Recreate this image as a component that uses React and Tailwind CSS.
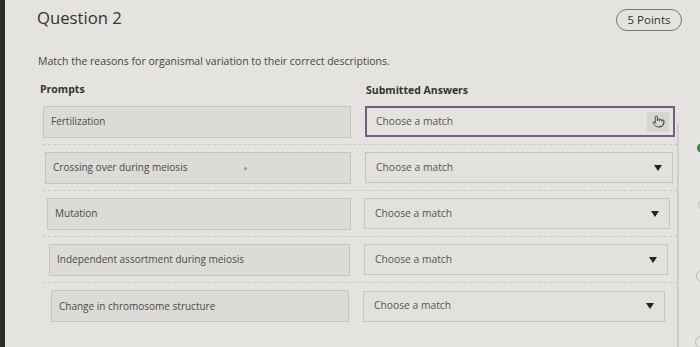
import React from "react";
import { Pointer } from "lucide-react";

const rows = [
  { text: "Fertilization", pml: "ml-0", pw: "w-[308px]", sml: "ml-[14px]", sw: "w-[310px]", active: true },
  { text: "Crossing over during meiosis", pml: "ml-[2px]", pw: "w-[306px]", sml: "ml-[14px]", sw: "w-[308px]", dot: true },
  { text: "Mutation", pml: "ml-[4px]", pw: "w-[304px]", sml: "ml-[13px]", sw: "w-[306px]" },
  { text: "Independent assortment during meiosis", pml: "ml-[6px]", pw: "w-[301px]", sml: "ml-[14px]", sw: "w-[304px]" },
  { text: "Change in chromosome structure", pml: "ml-[8px]", pw: "w-[298px]", sml: "ml-[14px]", sw: "w-[302px]", last: true },
];

function Caret() {
  return (
    <svg width="8" height="6" viewBox="0 0 8 6">
      <path d="M0 0 L8 0 L4 6 Z" fill="#222" />
    </svg>
  );
}

export default function App() {
  return (
    <div
      className="w-[700px] h-[347px] flex overflow-hidden bg-[#e4e3df] text-[#3b3b3b]"
      style={{ fontFamily: '"Open Sans", "Noto Sans", sans-serif' }}
    >
      <div className="w-[5px] shrink-0 bg-[#2b2b2b]" />
      <div className="w-[672px] shrink-0 flex flex-col relative z-10">
        <div className="flex items-start justify-between pl-[32px] pt-[7px]">
          <div className="text-[16.7px] leading-[22px] text-[#333]">Question 2</div>
          <div className="mt-[2px] h-[22px] w-[66px] shrink-0 rounded-full border border-[#777] flex items-center justify-center text-[11.5px] text-[#333] mr-[-5px]">
            5 Points
          </div>
        </div>
        <div className="pl-[33px] mt-[22px] text-[10.5px] leading-[16px] text-[#444]">
          Match the reasons for organismal variation to their correct descriptions.
        </div>
        <div className="flex mt-[12px] text-[10.5px] leading-[16px] font-bold text-[#333]">
          <div className="pl-[35px] w-[361px]">Prompts</div>
          <div className="mt-[1px]">Submitted Answers</div>
        </div>
        <div className="ml-[38px] mt-[1px] flex flex-col">
          {rows.map((r, i) => (
            <div
              key={i}
              className={
                "flex items-center h-[46px] " +
                (r.last ? "" : "border-b border-dashed border-[#cbcac5]")
              }
            >
              <div
                className={
                  r.pml +
                  " " +
                  r.pw +
                  " h-[32px] shrink-0 bg-[#dcdbd7] border border-[#c6c5c1] flex items-center pl-[7px] text-[10px] text-[#4a4a4a] relative"
                }
              >
                {r.text}
                {r.dot && <span className="absolute left-[198px] top-[14px] w-[3px] h-[3px] rounded-full bg-[#999]" />}
              </div>
              <div
                className={
                  r.sml +
                  " " +
                  r.sw +
                  " h-[31px] shrink-0 flex items-center justify-between text-[10.3px] text-[#555] " +
                  (r.active
                    ? "bg-[#e4e3df] border-2 border-[#6e6180] pl-[9px] pr-[4px]"
                    : "bg-[#e2e1dd] border border-[#c6c5c1] pl-[10px] pr-[10px]")
                }
              >
                <span>Choose a match</span>
                {r.active ? (
                  <span className="w-[22px] h-[20px] bg-[#d6d5d1] flex items-center justify-center">
                    <Pointer size={13} strokeWidth={1.6} color="#333" />
                  </span>
                ) : (
                  <Caret />
                )}
              </div>
            </div>
          ))}
        </div>
      </div>
      <div className="flex-1 flex flex-col">
        <div className="h-[123px]" />
        <div className="flex-1 border-l-2 border-[#cfceca] bg-[#e6e5e1] relative">
          <span className="absolute left-[18px] top-[20px] w-[10px] h-[10px] rounded-full bg-[#2f8a4e]" />
          <span className="absolute left-[19px] top-[76px] w-[12px] h-[12px] rounded-full border border-[#bbb]" />
          <span className="absolute left-[17px] top-[147px] w-[12px] h-[12px] rounded-full border border-[#bbb]" />
          <span className="absolute left-[16px] top-[213px] w-[12px] h-[12px] rounded-full border border-[#bbb]" />
        </div>
      </div>
    </div>
  );
}
